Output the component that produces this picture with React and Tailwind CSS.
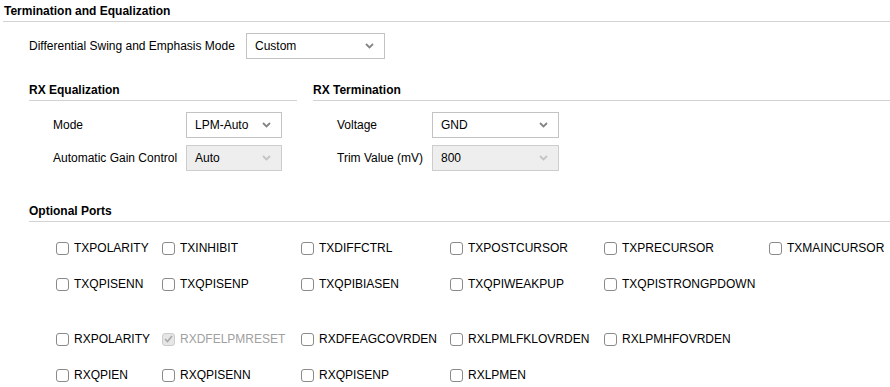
import React from "react";

const txRows = [
  ["TXPOLARITY", "TXINHIBIT", "TXDIFFCTRL", "TXPOSTCURSOR", "TXPRECURSOR", "TXMAINCURSOR"],
  ["TXQPISENN", "TXQPISENP", "TXQPIBIASEN", "TXQPIWEAKPUP", "TXQPISTRONGPDOWN"],
];

const rxRows = [
  ["RXPOLARITY", "RXDFELPMRESET", "RXDFEAGCOVRDEN", "RXLPMLFKLOVRDEN", "RXLPMHFOVRDEN"],
  ["RXQPIEN", "RXQPISENN", "RXQPISENP", "RXLPMEN"],
];

function Chevron({ disabled }) {
  return (
    <svg width="9" height="6" viewBox="0 0 9 6" className="shrink-0">
      <polyline
        points="1,1 4.5,4.5 8,1"
        fill="none"
        stroke={disabled ? "#c4c4c4" : "#858585"}
        strokeWidth="1.8"
      />
    </svg>
  );
}

function Select({ value, width, disabled }) {
  return (
    <div
      className={`flex items-center justify-between h-[26px] pl-[8px] pr-[10px] border ${
        disabled ? "bg-[#eeeeee] border-[#cdcdcd]" : "bg-white border-[#c3c3c3]"
      } ${width}`}
    >
      <span className="text-black">{value}</span>
      <Chevron disabled={disabled} />
    </div>
  );
}

function Heading({ children }) {
  return (
    <div className="h-[22px] pt-[4px] leading-[15px] font-bold border-b border-[#d3d3d3]">
      {children}
    </div>
  );
}

function Checkbox({ label }) {
  const disabled = label === "RXDFELPMRESET";
  return (
    <div className="flex items-center gap-[5px] h-[36px]">
      {disabled ? (
        <span className="w-[13px] h-[13px] rounded-[3px] border border-[#cccccc] bg-[#e6e6e6] flex items-center justify-center">
          <svg width="9" height="8" viewBox="0 0 9 8">
            <polyline points="1,4 3.5,6.5 8,1" fill="none" stroke="#a8a8a8" strokeWidth="1.6" />
          </svg>
        </span>
      ) : (
        <span className="w-[13px] h-[13px] rounded-[3px] border border-[#8a8a8a] bg-white" />
      )}
      <span className={disabled ? "text-[#a0a0a0]" : "text-black"}>{label}</span>
    </div>
  );
}

function PortGroup({ rows }) {
  return (
    <div className="grid grid-cols-[106px_139px_149px_154px_165px_auto] pl-[56px]">
      {rows.map((row) =>
        [0, 1, 2, 3, 4, 5].map((i) =>
          row[i] ? <Checkbox key={row[i]} label={row[i]} /> : <div key={i} />
        )
      )}
    </div>
  );
}

export default function App() {
  return (
    <div className="w-[890px] h-[387px] bg-white overflow-hidden font-['Liberation_Sans',Arial,sans-serif] text-[12px] text-black">
      <div className="ml-[3px] pl-[1px] h-[22px] pt-[4px] leading-[15px] font-bold border-b border-[#d3d3d3]">
        Termination and Equalization
      </div>

      <div className="flex items-center gap-[6px] pl-[29px] mt-[11px]">
        <span className="w-[211px]">Differential Swing and Emphasis Mode</span>
        <Select value="Custom" width="w-[139px]" />
      </div>

      <div className="flex gap-[16px] pl-[29px] mt-[20px]">
        <div className="w-[268px]">
          <Heading>RX Equalization</Heading>
          <div className="grid grid-cols-[133px_96px] gap-y-[7px] items-center pl-[24px] mt-[11px]">
            <span>Mode</span>
            <Select value="LPM-Auto" width="w-[96px]" />
            <span>Automatic Gain Control</span>
            <Select value="Auto" width="w-[96px]" disabled />
          </div>
        </div>
        <div className="flex-1">
          <Heading>RX Termination</Heading>
          <div className="grid grid-cols-[95px_127px] gap-y-[7px] items-center pl-[24px] mt-[11px]">
            <span>Voltage</span>
            <Select value="GND" width="w-[127px]" />
            <span>Trim Value (mV)</span>
            <Select value="800" width="w-[127px]" disabled />
          </div>
        </div>
      </div>

      <div className="pl-[29px] mt-[29px]">
        <Heading>Optional Ports</Heading>
      </div>

      <div className="mt-[8px]">
        <PortGroup rows={txRows} />
      </div>
      <div className="mt-[19px]">
        <PortGroup rows={rxRows} />
      </div>
    </div>
  );
}
